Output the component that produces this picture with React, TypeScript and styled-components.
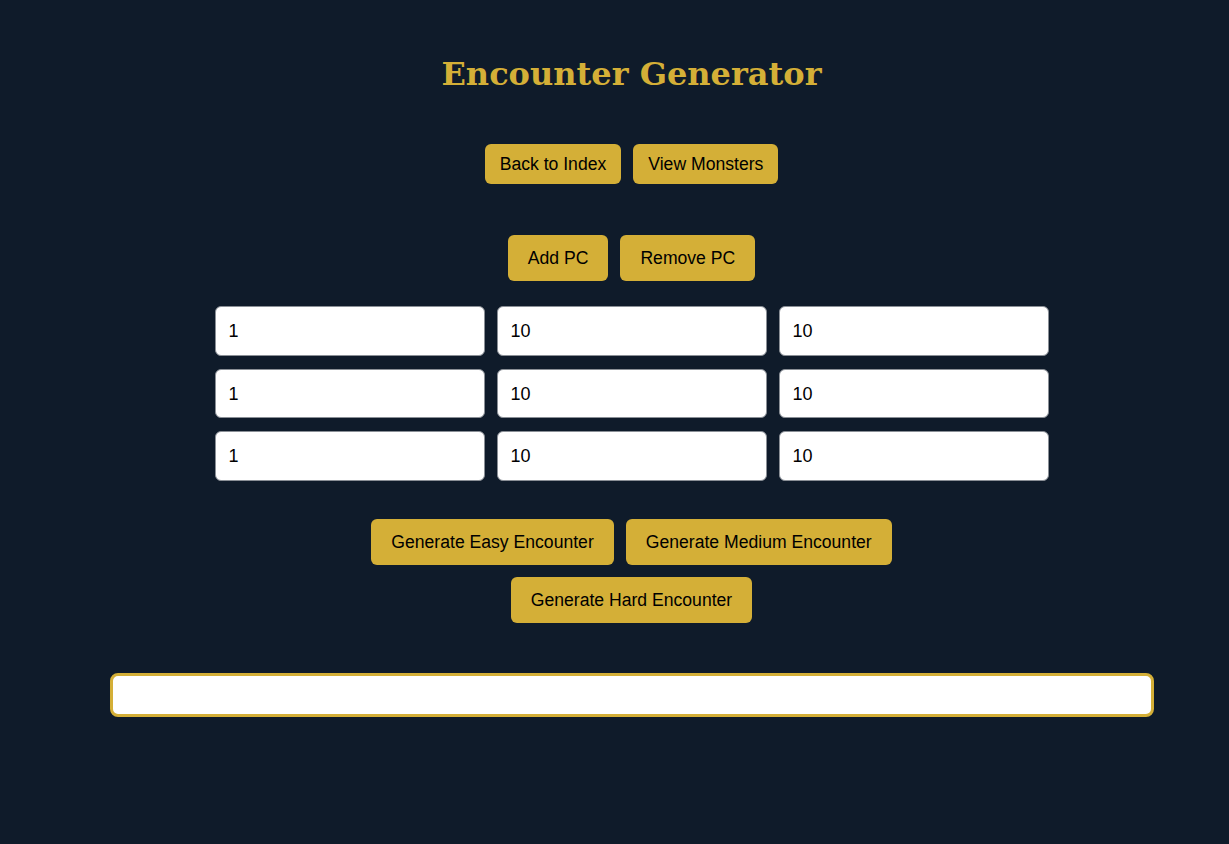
import React, { useState } from 'react';
import styled, { createGlobalStyle } from 'styled-components';

const GOLD = '#d4af37';
const NAVY = '#0f1b2a';

const GlobalStyle = createGlobalStyle`
  html, body {
    margin: 0;
    padding: 0;
    background: ${NAVY};
    font-family: 'Liberation Sans', Arial, sans-serif;
  }
`;

const Page = styled.div`
  min-height: 844px;
  box-sizing: border-box;
  padding: 54px 0 0 34px;
`;

const Main = styled.main`
  max-width: 1044px;
  margin: 0 auto;
  display: flex;
  flex-direction: column;
  align-items: center;
`;

const Title = styled.h1`
  margin: 0;
  font-family: 'DejaVu Serif', Georgia, serif;
  font-weight: bold;
  font-size: 32px;
  line-height: 41px;
  color: ${GOLD};
`;

const ButtonRow = styled.div<{ $top: number; $maxWidth?: number }>`
  display: flex;
  flex-wrap: wrap;
  justify-content: center;
  gap: 12px 12px;
  margin-top: ${(p) => p.$top}px;
  max-width: ${(p) => (p.$maxWidth ? `${p.$maxWidth}px` : 'none')};
`;

const Button = styled.button<{ $small?: boolean }>`
  background: ${GOLD};
  color: #000;
  border: none;
  border-radius: 6px;
  font-family: 'Liberation Sans', Arial, sans-serif;
  font-size: 17.6px;
  line-height: 20px;
  padding: ${(p) => (p.$small ? '10px 15px' : '13px 20px')};
  cursor: pointer;
`;

const PcGrid = styled.div`
  display: grid;
  grid-template-columns: repeat(3, 270px);
  grid-auto-rows: 49.5px;
  gap: 13px 12px;
  margin-top: 25px;
`;

const NumberInput = styled.input`
  box-sizing: border-box;
  height: 100%;
  padding: 2px 13px 0;
  border: 1px solid #8a8f96;
  border-radius: 6px;
  background: #fff;
  font-family: 'Liberation Sans', Arial, sans-serif;
  font-size: 18px;
  color: #000;
`;

const Output = styled.div`
  box-sizing: border-box;
  width: 100%;
  height: 44px;
  margin-top: 50px;
  background: #fff;
  border: 3px solid ${GOLD};
  border-radius: 8px;
`;

type Pc = { level: string; hp: string; ac: string };

export default function App() {
  const [pcs, setPcs] = useState<Pc[]>([
    { level: '1', hp: '10', ac: '10' },
    { level: '1', hp: '10', ac: '10' },
    { level: '1', hp: '10', ac: '10' },
  ]);

  const update = (i: number, key: keyof Pc, value: string) => {
    setPcs((prev) => prev.map((pc, j) => (j === i ? { ...pc, [key]: value } : pc)));
  };

  return (
    <Page>
      <GlobalStyle />
      <Main>
        <Title>Encounter Generator</Title>

        <ButtonRow $top={49}>
          <Button $small>Back to Index</Button>
          <Button $small>View Monsters</Button>
        </ButtonRow>

        <ButtonRow $top={51}>
          <Button onClick={() => setPcs((p) => [...p, { level: '1', hp: '10', ac: '10' }])}>Add PC</Button>
          <Button onClick={() => setPcs((p) => p.slice(0, -1))}>Remove PC</Button>
        </ButtonRow>

        <PcGrid>
          {pcs.map((pc, i) => (
            <React.Fragment key={i}>
              <NumberInput type="number" value={pc.level} onChange={(e) => update(i, 'level', e.target.value)} />
              <NumberInput type="number" value={pc.hp} onChange={(e) => update(i, 'hp', e.target.value)} />
              <NumberInput type="number" value={pc.ac} onChange={(e) => update(i, 'ac', e.target.value)} />
            </React.Fragment>
          ))}
        </PcGrid>

        <ButtonRow $top={38.5} $maxWidth={560}>
          <Button>Generate Easy Encounter</Button>
          <Button>Generate Medium Encounter</Button>
          <Button>Generate Hard Encounter</Button>
        </ButtonRow>

        <Output />
      </Main>
    </Page>
  );
}
